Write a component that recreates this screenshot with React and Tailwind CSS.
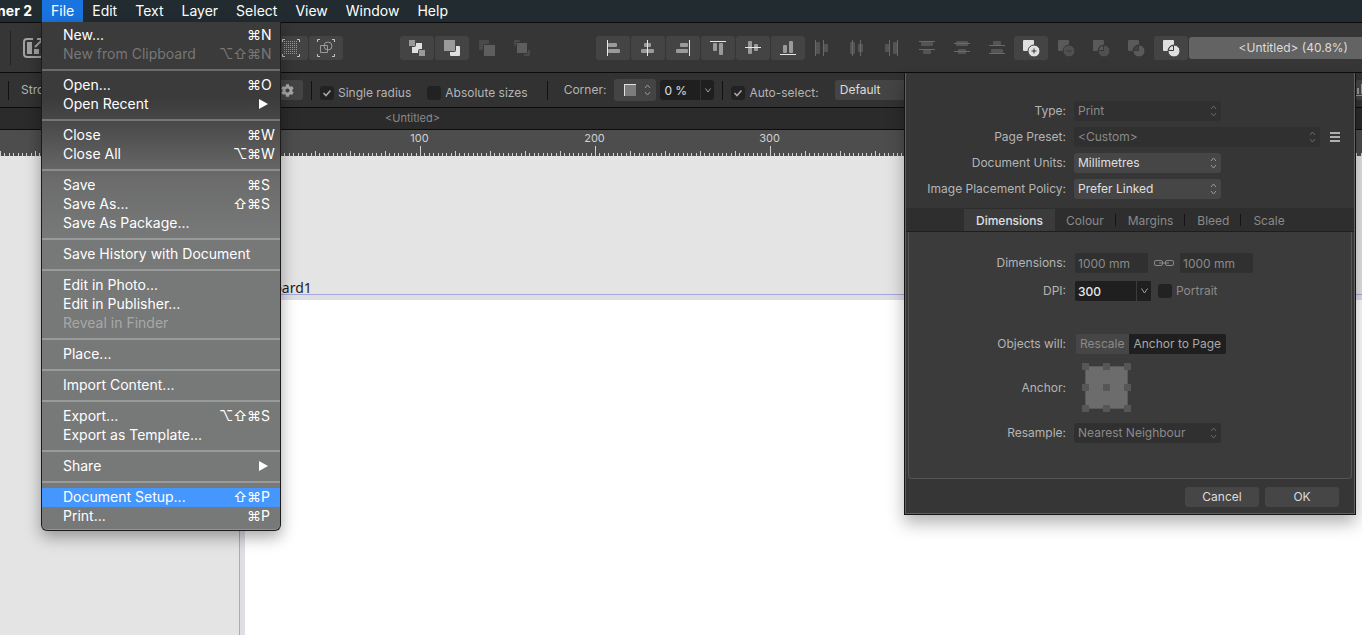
import { useState } from 'react';
import { FaCog } from 'react-icons/fa';

const menus = ['Edit', 'Text', 'Layer', 'Select', 'View', 'Window', 'Help'];

const fileMenu = [
  [
    { label: 'New...', mods: '⌘', letter: 'N' },
    { label: 'New from Clipboard', mods: '⌥⇧⌘', letter: 'N', disabled: true },
  ],
  [
    { label: 'Open...', mods: '⌘', letter: 'O' },
    { label: 'Open Recent', submenu: true },
  ],
  [
    { label: 'Close', mods: '⌘', letter: 'W' },
    { label: 'Close All', mods: '⌥⌘', letter: 'W' },
  ],
  [
    { label: 'Save', mods: '⌘', letter: 'S' },
    { label: 'Save As...', mods: '⇧⌘', letter: 'S' },
    { label: 'Save As Package...' },
  ],
  [{ label: 'Save History with Document' }],
  [
    { label: 'Edit in Photo...' },
    { label: 'Edit in Publisher...' },
    { label: 'Reveal in Finder', disabled: true },
  ],
  [{ label: 'Place...' }],
  [{ label: 'Import Content...' }],
  [
    { label: 'Export...', mods: '⌥⇧⌘', letter: 'S' },
    { label: 'Export as Template...' },
  ],
  [{ label: 'Share', submenu: true }],
  [
    { label: 'Document Setup...', mods: '⇧⌘', letter: 'P', active: true },
    { label: 'Print...', mods: '⌘', letter: 'P' },
  ],
];

// each entry is [line rects, bar rects] as x, y, w, h on a 16px grid
const alignIcons = [
  { name: 'Align left', lines: [[2, 0, 1, 16]], bars: [[3, 3, 9, 4], [3, 9, 12, 4]] },
  { name: 'Align centre', lines: [[7, 0, 1, 16]], bars: [[4, 3, 7, 4], [1, 9, 13, 4]] },
  { name: 'Align right', lines: [[14, 0, 1, 16]], bars: [[5, 3, 8, 4], [1, 9, 12, 4]] },
  { name: 'Align top', lines: [[0, 1, 16, 1]], bars: [[3, 3, 4, 8], [9, 3, 4, 12]] },
  { name: 'Align middle', lines: [[0, 7, 16, 1]], bars: [[3, 1, 4, 13], [9, 4, 4, 7]] },
  { name: 'Align bottom', lines: [[0, 14, 16, 1]], bars: [[3, 5, 4, 8], [9, 1, 4, 12]] },
];

const spaceAcrossIcons = [
  { name: 'Space left', lines: [[0, 0, 1, 16], [8, 0, 1, 16]], bars: [[1, 2, 4, 12], [9, 4, 4, 8]] },
  { name: 'Space centre', lines: [[2, 0, 1, 16], [10, 0, 1, 16]], bars: [[0, 2, 5, 12], [8, 4, 5, 8]] },
  { name: 'Space right', lines: [[4, 0, 1, 16], [12, 0, 1, 16]], bars: [[0, 4, 4, 8], [8, 2, 4, 12]] },
];

const spaceDownIcons = [
  { name: 'Space top', lines: [[0, 1, 16, 1], [0, 9, 16, 1]], bars: [[2, 2, 12, 4], [4, 10, 8, 4]] },
  { name: 'Space middle', lines: [[0, 3, 16, 1], [0, 11, 16, 1]], bars: [[2, 1, 12, 5], [4, 9, 8, 5]] },
  { name: 'Space bottom', lines: [[0, 5, 16, 1], [0, 13, 16, 1]], bars: [[4, 1, 8, 4], [2, 9, 12, 4]] },
];

function BarsIcon({ lines, bars, dim }) {
  return (
    <svg width="16" height="16" viewBox="0 0 16 16">
      {bars.map(([x, y, w, h], i) => (
        <rect key={i} x={x} y={y} width={w} height={h} rx="1" fill={dim ? '#545454' : '#9a9a9a'} />
      ))}
      {lines.map(([x, y, w, h], i) => (
        <rect key={i} x={x} y={y} width={w} height={h} fill={dim ? '#6a6a6a' : '#e8e8e8'} />
      ))}
    </svg>
  );
}

function BooleanIcon({ kind, dim }) {
  const back = dim ? '#5a5a5a' : '#e0e0e0';
  const front = dim ? '#505050' : '#e0e0e0';
  const gap = dim ? '#363636' : '#444444';
  return (
    <svg width="18" height="18" viewBox="0 0 18 18">
      <rect x="1" y="1" width="11" height="11" rx="1" fill={back} />
      <circle cx="12" cy="12" r="6" fill={kind === 'add' || kind === 'subtract' || kind === 'intersect' ? front : back} stroke={gap} strokeWidth="1" />
      {kind === 'add' && <path d="M12 9.500v5M9.500 12h5" stroke="#333" strokeWidth="1" />}
      {kind === 'subtract' && <path d="M9.500 12h5" stroke="#363636" strokeWidth="1" />}
      {(kind === 'intersect' || kind === 'divide' || kind === 'xor') && (
        <path d="M6.500 11.500A5.500 5.500 0 0 1 11.500 6.500V11.500Z" fill={kind === 'divide' ? '#444444' : kind === 'xor' ? '#e0e0e0' : '#5a5a5a'} stroke="#363636" />
      )}
    </svg>
  );
}

function ToolButton({ label, flat, children }) {
  return (
    <button
      type="button"
      aria-label={label}
      className={`flex h-6 w-[34px] items-center justify-center rounded-[3px] ${flat ? '' : 'bg-[#444444]'}`}
    >
      {children}
    </button>
  );
}

function Stepper({ dim }) {
  return (
    <svg width="7" height="12" viewBox="0 0 7 12" fill="none" stroke={dim ? '#686868' : '#9a9a9a'} className="pointer-events-none">
      <path d="M1 4L3.500 1L6 4M1 8L3.500 11L6 8" />
    </svg>
  );
}

function Separator() {
  return <div className="h-[19px] w-px bg-[#111111]" />;
}

function Checkbox({ label, checked, dim }) {
  return (
    <label className={`flex items-center gap-1 ${dim ? 'text-[#8a8a8a]' : 'text-[#b4b4b4]'}`}>
      <span className="relative flex">
        <input type="checkbox" defaultChecked={checked} className="peer size-3.5 appearance-none rounded-[3px] bg-[#222222]" />
        <svg width="14" height="14" viewBox="0 0 14 14" fill="none" stroke="#a8a8a8" strokeWidth="1.600" className="pointer-events-none absolute inset-0 hidden peer-checked:block">
          <path d="M3.500 7L6 9.500L10.500 4.500" />
        </svg>
      </span>
      {label}
    </label>
  );
}

function Shortcut({ mods, letter }) {
  return (
    <span className="flex">
      {mods.split('').map((m) => (
        <span key={m} className="w-3.5 text-center">{m}</span>
      ))}
      <span className="w-[15px] text-left">{letter}</span>
    </span>
  );
}

function FileMenu() {
  return (
    <div
      role="menu"
      className="absolute top-full -left-px z-20 w-60 rounded-b-md border border-t-0 border-[#1c1c1c] bg-linear-to-b from-[#3b3b3b] from-15% via-[#6b6c6b] via-31% to-[#777878] to-42% pt-1 pb-1 shadow-[0_6px_16px_rgba(0,0,0,0.35),inset_0_-1px_0_rgba(255,255,255,0.2)]"
    >
      {fileMenu.map((group, i) => (
        <div key={i}>
          {i > 0 && <div className="my-[5px] h-0.5 bg-white/25" />}
          {group.map((item) => (
            <button
              key={item.label}
              type="button"
              role="menuitem"
              disabled={item.disabled}
              className={`flex h-[19px] w-full items-center justify-between pr-1 pb-0.5 pl-[21px] text-left whitespace-nowrap ${
                item.active ? 'bg-[#4597fe]' : ''
              } ${item.disabled ? (i === 0 ? 'text-[#777777]' : 'text-[#a8a8a8]') : 'text-white'}`}
            >
              <span>{item.label}</span>
              {item.mods && <Shortcut mods={item.mods} letter={item.letter} />}
              {item.submenu && (
                <svg width="9" height="10" viewBox="0 0 9 10" className="mr-2">
                  <path d="M0 0L9 5L0 10Z" fill="#fff" />
                </svg>
              )}
            </button>
          ))}
        </div>
      ))}
    </div>
  );
}

function MenuBar() {
  return (
    <nav className="flex h-[22px] shrink-0 items-stretch bg-[#222c30] text-[14px] leading-[22px] text-white">
      <div className="flex w-[42px] justify-end overflow-hidden pr-2.5 font-bold whitespace-nowrap">Designer 2</div>
      <div className="relative">
        <button type="button" className="h-full bg-[#1a74e0] px-[9px]">File</button>
        <FileMenu />
      </div>
      {menus.map((m) => (
        <button key={m} type="button" className="px-[9px]">{m}</button>
      ))}
    </nav>
  );
}

function Toolbar() {
  return (
    <div className="flex h-[51px] shrink-0 items-center border-y border-[#0c0c0c] bg-[#363636]">
      <div className="flex w-[274px] items-center">
        <div className="ml-2.5 h-[34px] w-px bg-[#222222]" />
        <button type="button" aria-label="Export persona" className="ml-3">
          <svg width="22" height="22" viewBox="0 0 22 22" fill="none" stroke="#a2a2a2" strokeWidth="2">
            <path d="M10 2H4a3 3 0 0 0-3 3v12a3 3 0 0 0 3 3h13a3 3 0 0 0 3-3v-3" />
            <path d="M4 5h5v12H4z" fill="#a2a2a2" stroke="none" />
            <path d="M11 12h5v5h-5z" fill="#a2a2a2" stroke="none" />
            <path d="M12 10L19 3M14 2h6v6" />
          </svg>
        </button>
      </div>
      <div className="flex gap-px">
        <ToolButton label="Snapping grid">
          <svg width="18" height="18" viewBox="0 0 18 18" fill="none" stroke="#c4c4c4">
            <path d="M3 .5H.5V3M15 .5h2.500V3M3 17.500H.5V15M15 17.500h2.500V15" />
            {[3, 5, 7, 9, 11, 13, 15].map((y) => (
              <path key={y} d={`M2 ${y - 0.5}h14`} strokeDasharray="1 1" stroke="#9a9a9a" />
            ))}
          </svg>
        </ToolButton>
        <ToolButton label="Snapping objects">
          <svg width="18" height="18" viewBox="0 0 18 18" fill="none" stroke="#c4c4c4">
            <path d="M3 .5H.5V3M15 .5h2.500V3M3 17.500H.5V15M15 17.500h2.500V15" />
            <path d="M3.500 6.500h7v7h-7z" stroke="#9a9a9a" />
            <circle cx="11" cy="7" r="4" stroke="#9a9a9a" />
          </svg>
        </ToolButton>
      </div>
      <div className="ml-[57px] flex gap-px">
        <ToolButton label="Move to front">
          <svg width="16" height="16" viewBox="0 0 16 16" stroke="#444444" strokeWidth="1">
            <path d="M3 3h10v10H3z" fill="#e0e0e0" stroke="none" />
            <rect x="-.5" y="-.5" width="7" height="7" rx="1" fill="#9a9a9a" />
            <rect x="9.500" y="9.500" width="7" height="7" rx="1" fill="#9a9a9a" />
          </svg>
        </ToolButton>
        <ToolButton label="Move forward">
          <svg width="16" height="16" viewBox="0 0 16 16">
            <rect x="6" y="6" width="10" height="10" rx="1" fill="#e0e0e0" />
            <rect x="-.5" y="-.5" width="12" height="12" rx="1" fill="#9a9a9a" stroke="#444444" />
          </svg>
        </ToolButton>
        <ToolButton label="Move back" flat>
          <svg width="16" height="16" viewBox="0 0 16 16">
            <rect x="0" y="0" width="10" height="10" rx="1" fill="#4a4a4a" />
            <rect x="4.500" y="4.500" width="12" height="12" rx="1" fill="#5e5e5e" stroke="#363636" />
          </svg>
        </ToolButton>
        <ToolButton label="Move to back" flat>
          <svg width="16" height="16" viewBox="0 0 16 16">
            <rect x="0" y="0" width="6" height="6" rx="1" fill="#4a4a4a" />
            <rect x="10" y="10" width="6" height="6" rx="1" fill="#4a4a4a" />
            <rect x="2.500" y="2.500" width="11" height="11" rx="1" fill="#5e5e5e" stroke="#363636" />
          </svg>
        </ToolButton>
      </div>
      <div className="ml-[57px] flex gap-px">
        {alignIcons.map((icon) => (
          <ToolButton key={icon.name} label={icon.name}>
            <BarsIcon {...icon} />
          </ToolButton>
        ))}
        {spaceAcrossIcons.map((icon) => (
          <ToolButton key={icon.name} label={icon.name} flat>
            <BarsIcon {...icon} dim />
          </ToolButton>
        ))}
      </div>
      <div className="flex gap-px">
        {spaceDownIcons.map((icon) => (
          <ToolButton key={icon.name} label={icon.name} flat>
            <BarsIcon {...icon} dim />
          </ToolButton>
        ))}
      </div>
      <div className="flex gap-px">
        <ToolButton label="Add"><BooleanIcon kind="add" /></ToolButton>
        <ToolButton label="Subtract" flat><BooleanIcon kind="subtract" dim /></ToolButton>
        <ToolButton label="Intersect" flat><BooleanIcon kind="intersect" dim /></ToolButton>
        <ToolButton label="Divide" flat><BooleanIcon kind="divide" dim /></ToolButton>
        <ToolButton label="Combine"><BooleanIcon kind="xor" /></ToolButton>
      </div>
      <div className="ml-px h-[22px] flex-1 rounded-l-[3px] bg-[#636363] pr-3.5 text-right text-[12px] leading-[22px] whitespace-nowrap text-[#dcdcdc]">
        &lt;Untitled&gt; (40.8%)
      </div>
    </div>
  );
}

function ContextBar() {
  return (
    <div className="flex h-[35px] shrink-0 items-center border-b border-[#0c0c0c] bg-[#323232] text-[12px] whitespace-nowrap text-[#b4b4b4]">
      <div className="flex w-[303px] items-center pl-2">
        <Separator />
        <span className="ml-3">Stroke:</span>
        <button type="button" aria-label="Stroke settings" className="ml-auto flex h-5 w-8 items-center justify-center rounded-[3px] bg-[#444444]">
          <FaCog size={13} color="#a8a8a8" />
        </button>
      </div>
      <div className="ml-2 flex items-center">
        <Separator />
      </div>
      <div className="ml-2 flex items-center gap-4 pt-[5px]">
        <Checkbox label="Single radius" checked />
        <Checkbox label="Absolute sizes" />
      </div>
      <div className="ml-[19px] flex items-center">
        <Separator />
      </div>
      <label htmlFor="corner-size" className="ml-4">Corner:</label>
      <button type="button" aria-label="Corner type" className="ml-2 flex h-[22px] w-[42px] items-center gap-2 rounded-[3px] bg-[#444444] pl-2.5">
        <span className="size-3 border-t border-l border-[#e0e0e0] bg-[#7c7c7c]" />
        <Stepper />
      </button>
      <div className="ml-1 flex h-5 items-center gap-px">
        <input id="corner-size" defaultValue="0 %" className="h-5 w-10 rounded-l-[3px] bg-[#1f1f1f] pl-1 text-[#e0e0e0]" />
        <button type="button" aria-label="Corner presets" className="flex h-5 w-[13px] items-center justify-center rounded-r-[3px] bg-[#1f1f1f]">
          <svg width="6" height="5" viewBox="0 0 6 5" fill="none" stroke="#a0a0a0">
            <path d="M.5 .5L3 4L5.500 .5" />
          </svg>
        </button>
      </div>
      <div className="mx-2 flex items-center">
        <Separator />
      </div>
      <div className="pt-[5px]">
        <Checkbox label="Auto-select:" checked />
      </div>
      <select aria-label="Auto-select" className="ml-4 h-5 w-[120px] appearance-none rounded-[3px] bg-[#444444] pl-[5px] text-[#dcdcdc]">
        <option>Default</option>
      </select>
      <button type="button" aria-label="Alignment" className="mr-[-20px] ml-auto flex h-5 w-[26px] items-center rounded-[3px] bg-[#444444]">
        <svg width="16" height="14" viewBox="0 0 16 14" fill="#9a9a9a">
          <path d="M1 5h2v6H1zM5 1h4v10H5zM0 12h16v1H0z" />
        </svg>
      </button>
    </div>
  );
}

function Ruler() {
  const ticks = [];
  // 40 minor steps to every 100 units, 175px apart
  for (let i = -56; i < 280; i++) {
    const height = i % 40 === 0 ? 10 : i % 8 === 0 ? 5 : 3;
    ticks.push(
      <rect key={i} x={Math.round(245 + i * 4.375)} y={26 - height} width="1" height={height} fill="#d0d0d0" />
    );
  }
  return (
    <div className="relative h-[26px] shrink-0 overflow-hidden bg-[#4d4d4d]">
      <svg className="absolute inset-0" width="100%" height="26">{ticks}</svg>
      <div className="flex pl-[157px] text-[11px] leading-4 text-[#d0d0d0]">
        {[0, 100, 200, 300, 400, 500, 600].map((n) => (
          <span key={n} className="w-[175px] shrink-0 text-center">{n}</span>
        ))}
      </div>
    </div>
  );
}

function Canvas() {
  return (
    <main className="flex flex-1 flex-col bg-[#e4e4e4]">
      <div className="pt-[126px] pl-[245px] font-['Noto_Sans',sans-serif] text-[14px] leading-[12px] text-[#1c1c1c]">Artboard1</div>
      <div className="ml-[239px] flex flex-1 border-t border-l border-[#a6a6dd] bg-[#dfdfe3] pt-[5px] pl-[5px]">
        <div className="flex-1 bg-white" />
      </div>
    </main>
  );
}

function Row({ label, htmlFor, className = '', children }) {
  return (
    <div className={`flex items-center gap-2 ${className}`}>
      <label htmlFor={htmlFor} className="w-40 shrink-0 text-right text-[#b4b4b4]">{label}</label>
      {children}
    </div>
  );
}

function Popup({ id, value, dim, wide }) {
  return (
    <div className={`relative flex items-center ${wide ? 'w-[246px]' : 'w-[147px]'}`}>
      <select
        id={id}
        disabled={dim}
        className={`h-5 w-full appearance-none rounded-[3px] pl-1 opacity-100 ${dim ? 'bg-[#303030] text-[#8a8a8a]' : 'bg-[#464646] text-[#e0e0e0]'}`}
      >
        <option>{value}</option>
      </select>
      <span className="pointer-events-none absolute right-1">
        <Stepper dim={dim} />
      </span>
    </div>
  );
}

function AnchorGrid() {
  const spots = [0, 21, 42];
  return (
    <svg width="49" height="49" viewBox="0 0 49 49" className="ml-2">
      <rect x="3.500" y="3.500" width="42" height="42" fill="#6c6c6c" stroke="#5a5a5a" />
      {spots.map((y) => spots.map((x) => <rect key={`${x}-${y}`} x={x} y={y} width="7" height="7" fill="#565656" />))}
    </svg>
  );
}

function DocumentSetup() {
  const [tab, setTab] = useState('Dimensions');
  return (
    <section
      aria-label="Document Setup"
      className="absolute top-0 right-[6px] z-10 w-[452px] border border-t-0 border-[#141414] bg-[#363636] text-[12px] whitespace-nowrap shadow-[0_8px_16px_rgba(0,0,0,0.3)]"
    >
      <div className="border border-t-0 border-[#606060]">
        <div className="flex flex-col gap-1.5 pt-7 pb-[9px]">
          <Row label="Type:" htmlFor="type"><Popup id="type" value="Print" dim /></Row>
          <Row label="Page Preset:" htmlFor="preset">
            <Popup id="preset" value="<Custom>" dim wide />
            <button type="button" aria-label="Preset options" className="ml-0.5">
              <svg width="10" height="10" viewBox="0 0 10 10" fill="#b0b0b0">
                <path d="M0 0h10v2H0zM0 4h10v2H0zM0 8h10v2H0z" />
              </svg>
            </button>
          </Row>
          <Row label="Document Units:" htmlFor="units"><Popup id="units" value="Millimetres" /></Row>
          <Row label="Image Placement Policy:" htmlFor="policy"><Popup id="policy" value="Prefer Linked" /></Row>
        </div>
        <div className="flex h-6 items-end border-b border-[#1e1e1e] bg-[#2e2e2e] pl-[58px]">
          {['Dimensions', 'Colour', 'Margins', 'Bleed', 'Scale'].map((t, i) => (
            <div key={t} className="flex items-center">
              {i > 1 && <div className="mr-px h-3 w-px bg-[#141414]" />}
              <button
                type="button"
                onClick={() => setTab(t)}
                className={`h-[22px] pt-0.5 ${i === 0 ? 'px-3' : 'px-[11px]'} ${t === tab ? 'bg-[#3b3b3b] font-medium text-[#e0e0e0]' : 'text-[#8a8a8a]'}`}
              >
                {t}
              </button>
            </div>
          ))}
        </div>
        <div className="mx-0.5 rounded-b-[4px] border border-t-0 border-[#555555] bg-[#3b3b3b] pt-[21px] pb-[35px]">
          <Row label="Dimensions:" htmlFor="width" className="-ml-[3px]">
            <div className="flex items-center gap-1.5 pl-px">
              <input id="width" disabled defaultValue="1000 mm" className="h-5 w-[73px] rounded-[2px] bg-[#303030] pl-[3px] text-[#8a8a8a]" />
              <svg width="20" height="8" viewBox="0 0 20 8" fill="none" stroke="#8a8a8a">
                <rect x=".5" y="1.500" width="8" height="5" rx="1.500" />
                <rect x="11.500" y="1.500" width="8" height="5" rx="1.500" />
                <path d="M5 4h3M9 4h2M12 4h3" />
              </svg>
              <input aria-label="Height" disabled defaultValue="1000 mm" className="h-5 w-[73px] rounded-[2px] bg-[#303030] pl-[3px] text-[#8a8a8a]" />
            </div>
          </Row>
          <Row label="DPI:" htmlFor="dpi" className="mt-2 -ml-[3px]">
            <div className="flex items-center pl-px">
              <input id="dpi" defaultValue="300" className="h-5 w-[61px] rounded-l-[2px] bg-[#1f1f1f] pl-[3px] font-medium text-[#e8e8e8]" />
              <button type="button" aria-label="DPI presets" className="ml-px mr-[7px] flex h-5 w-3.5 items-center justify-center bg-[#1f1f1f]">
                <svg width="7" height="6" viewBox="0 0 7 6" fill="none" stroke="#a0a0a0">
                  <path d="M.5 .5L3.500 5L6.500 .5" />
                </svg>
              </button>
              <Checkbox label="Portrait" dim />
            </div>
          </Row>
          <Row label="Objects will:" className="mt-[33px] -ml-[3px]">
            <div className="flex pl-0.5">
              <button type="button" className="h-5 rounded-l-[2px] bg-[#464646] px-1 text-[#8a8a8a]">Rescale</button>
              <button type="button" className="h-5 rounded-r-[2px] bg-[#1f1f1f] px-[5px] text-[#a8a8a8]">Anchor to Page</button>
            </div>
          </Row>
          <Row label="Anchor:" className="mt-[9px] -ml-[3px]"><AnchorGrid /></Row>
          <Row label="Resample:" htmlFor="resample" className="mt-[11px] -ml-[3px]"><Popup id="resample" value="Nearest Neighbour" dim /></Row>
        </div>
        <div className="flex justify-end gap-1.5 pt-2 pr-[15px] pb-1.5 text-[#dcdcdc]">
          <button type="button" className="h-5 w-[74px] rounded-[3px] bg-[#464646]">Cancel</button>
          <button type="button" className="h-5 w-[74px] rounded-[3px] bg-[#464646]">OK</button>
        </div>
      </div>
    </section>
  );
}

export default function App() {
  return (
    <div className="flex h-screen flex-col overflow-hidden bg-[#363636] font-['Inter','DejaVu_Sans',sans-serif]">
      <MenuBar />
      <Toolbar />
      <div className="relative flex flex-1 flex-col">
        <ContextBar />
        <div className="flex h-[22px] shrink-0 items-center border-b border-[#0c0c0c] bg-[#2b2b2b] pl-[385px] text-[11px] text-[#8a8a8a]">
          &lt;Untitled&gt;
        </div>
        <Ruler />
        <Canvas />
        <DocumentSetup />
      </div>
    </div>
  );
}
